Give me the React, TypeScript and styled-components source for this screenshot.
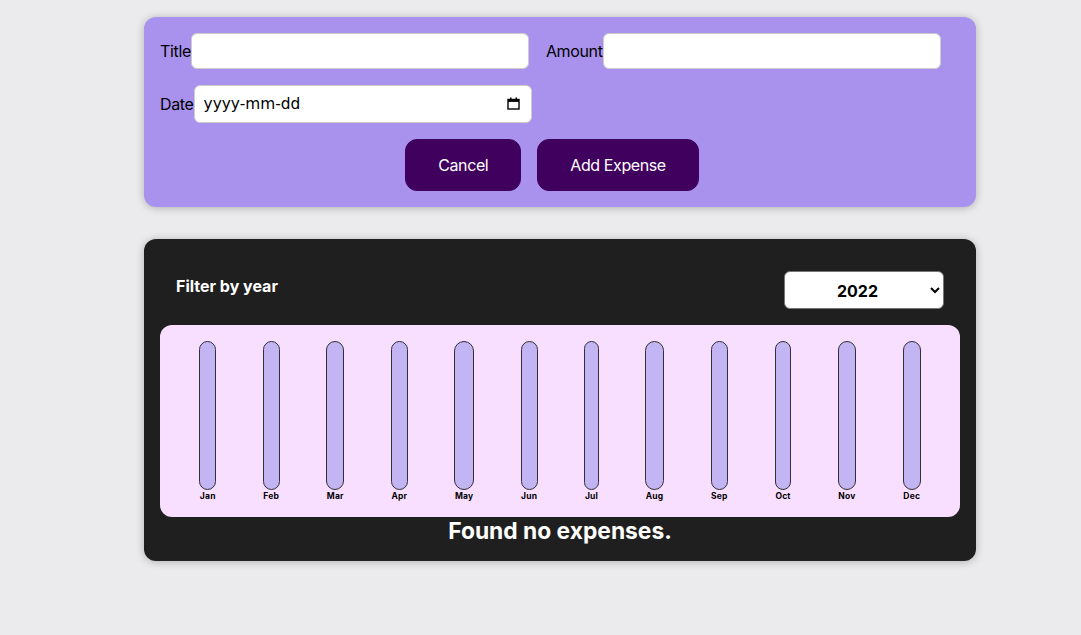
import styled, { createGlobalStyle } from 'styled-components'

const GlobalStyle = createGlobalStyle`
    html, body {
        margin: 0;
        padding: 0;
        background: #ebebed;
        font-family: Inter, 'Liberation Sans', sans-serif;
    }
    * {
        box-sizing: border-box;
    }
`

const months = ['Jan', 'Feb', 'Mar', 'Apr', 'May', 'Jun', 'Jul', 'Aug', 'Sep', 'Oct', 'Nov', 'Dec']

const CalendarIcon = () => (
    <svg width="13" height="13" viewBox="0 0 13 13" fill="none">
        <rect x="1" y="2.5" width="11" height="9.5" stroke="#000" strokeWidth="1.4" />
        <rect x="1" y="2.5" width="11" height="2.4" fill="#000" />
        <rect x="3" y="0.5" width="1.5" height="2.5" fill="#000" />
        <rect x="8.5" y="0.5" width="1.5" height="2.5" fill="#000" />
    </svg>
)

const App: React.FC = () => {
    return (
        <Page>
            <GlobalStyle />
            <NewExpense>
                <Controls>
                    <Control>
                        <label>Title</label>
                        <TextInput type="text" />
                    </Control>
                    <Control>
                        <label>Amount</label>
                        <TextInput type="number" />
                    </Control>
                    <Control>
                        <label>Date</label>
                        <DateField>
                            <DateInput type="text" placeholder="yyyy-mm-dd" />
                            <PickerIcon>
                                <CalendarIcon />
                            </PickerIcon>
                        </DateField>
                    </Control>
                </Controls>
                <Actions>
                    <Button type="button">Cancel</Button>
                    <Button type="submit">Add Expense</Button>
                </Actions>
            </NewExpense>

            <Expenses>
                <Filter>
                    <label>Filter by year</label>
                    <YearSelect defaultValue="2022">
                        <option value="2022">2022</option>
                        <option value="2021">2021</option>
                        <option value="2020">2020</option>
                        <option value="2019">2019</option>
                    </YearSelect>
                </Filter>
                <Chart>
                    {months.map(month => (
                        <ChartBar key={month}>
                            <BarInner>
                                <BarFill style={{ height: '0%' }} />
                            </BarInner>
                            <BarLabel>{month}</BarLabel>
                        </ChartBar>
                    ))}
                </Chart>
                <Fallback>Found no expenses.</Fallback>
            </Expenses>
        </Page>
    )
}

export default App

const Page = styled.div`
    padding: 17px 0 74px 144px;
    display: flex;
    flex-direction: column;
    gap: 32px;
`

const Card = styled.div`
    width: 832px;
    padding: 16px;
    border-radius: 12px;
    box-shadow: 0 1px 8px rgba(0, 0, 0, 0.25);
`

const NewExpense = styled(Card)`
    background: #a892ee;
`

const Controls = styled.div`
    display: flex;
    flex-wrap: wrap;
    column-gap: 17px;
    row-gap: 16px;
    margin-bottom: 16px;
`

const Control = styled.div`
    display: flex;
    align-items: center;

    label {
        font-size: 16px;
        letter-spacing: -0.35px;
        color: #000;
    }
`

const TextInput = styled.input`
    width: 338px;
    height: 36px;
    padding: 8px;
    border: 1px solid #ccc;
    border-radius: 6px;
    background: #fff;
    font-size: 13px;
    outline: none;
`

const DateField = styled.div`
    position: relative;
    display: flex;
`

const DateInput = styled.input`
    width: 338px;
    height: 38px;
    padding: 8px 9px;
    border: 1px solid #ccc;
    border-radius: 6px;
    background: #fff;
    font-family: 'DejaVu Sans', sans-serif;
    font-size: 15.4px;
    color: #000;
    outline: none;

    &::placeholder {
        color: #000;
    }
`

const PickerIcon = styled.span`
    position: absolute;
    right: 12px;
    top: 12px;
    display: flex;
`

const Actions = styled.div`
    display: flex;
    justify-content: center;
`

const Button = styled.button`
    font-family: inherit;
    font-size: 16px;
    line-height: 18px;
    letter-spacing: -0.4px;
    padding: 16px 32px;
    border: 1px solid #40005d;
    background: #40005d;
    color: #fff;
    border-radius: 12px;
    margin-right: 16px;
    cursor: pointer;
`

const Expenses = styled(Card)`
    background: #1f1f1f;
`

const Filter = styled.div`
    display: flex;
    align-items: center;
    justify-content: space-between;
    margin: 16px 0;
    padding: 0 16px;
    color: #fff;

    label {
        font-weight: 700;
        font-size: 16px;
        margin-bottom: 8px;
    }
`

const YearSelect = styled.select`
    width: 160px;
    height: 38px;
    padding: 8px 48px;
    font-family: inherit;
    font-size: 16px;
    font-weight: 700;
    border-radius: 6px;
    background: #fff;
    color: #000;
    border: 1px solid #767676;
`

const Chart = styled.div`
    height: 192px;
    padding: 16px;
    border-radius: 12px;
    background: #f8dfff;
    display: flex;
    justify-content: space-around;
`

const ChartBar = styled.div`
    height: 100%;
    display: flex;
    flex-direction: column;
    align-items: center;
`

const BarInner = styled.div`
    flex: 1;
    width: 100%;
    border: 1px solid #313131;
    border-radius: 12px;
    background: #c3b4f3;
    overflow: hidden;
    display: flex;
    flex-direction: column;
    justify-content: flex-end;
`

const BarFill = styled.div`
    width: 100%;
    background: #4826b9;
`

const BarLabel = styled.div`
    font-size: 8.5px;
    font-weight: 700;
    line-height: 10px;
    letter-spacing: 0.2px;
    padding: 0 0.5px;
    margin-top: 1px;
    color: #000;
`

const Fallback = styled.h2`
    margin: 0;
    color: #fff;
    text-align: center;
    font-size: 22.8px;
    line-height: 28px;
    font-weight: 700;
`
